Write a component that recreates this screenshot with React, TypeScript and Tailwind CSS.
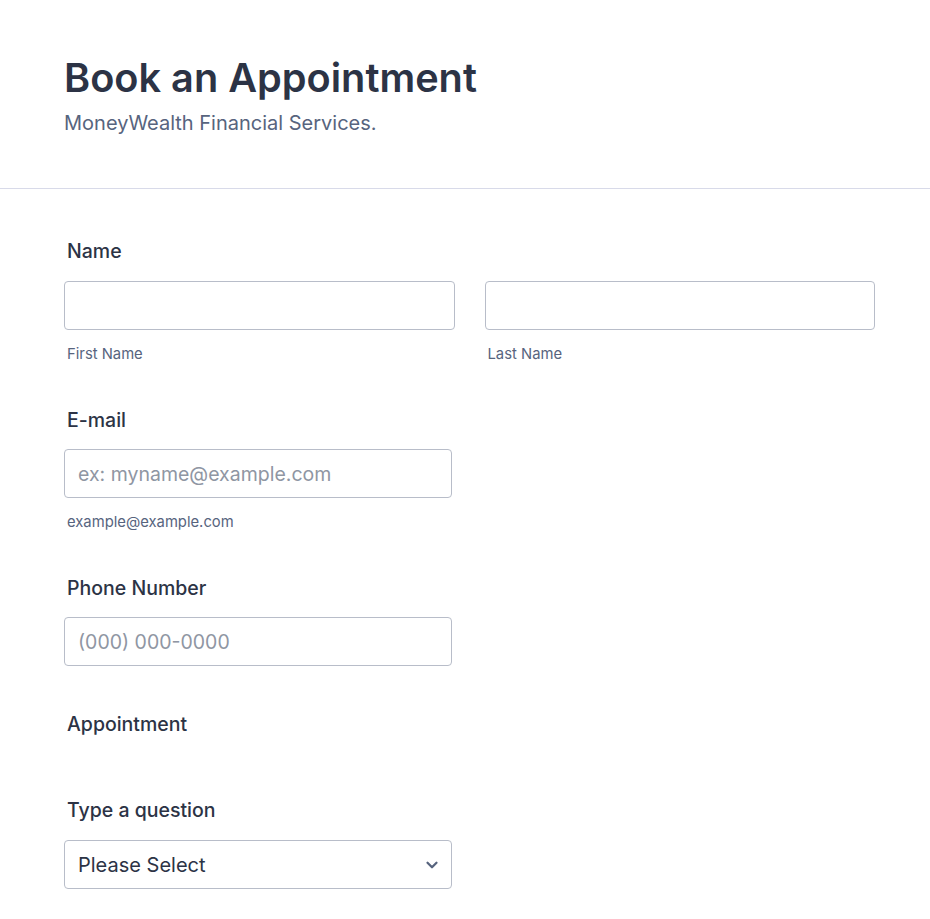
import { ChevronDown } from "lucide-react";

const inputCls =
  "block h-[49px] w-full rounded-[4px] border border-[#b8bdc9] bg-white px-[13px] text-[19.5px] text-[#2c3345] placeholder:text-[#8f96a3] outline-none";

function Label({ children }: { children: React.ReactNode }) {
  return (
    <div className="pl-[3px] text-[19.5px] leading-[24px] font-medium text-[#2c3345]">
      {children}
    </div>
  );
}

function SubLabel({ children }: { children: React.ReactNode }) {
  return (
    <div className="mt-[15px] pl-[3px] text-[14.8px] leading-[18px] text-[#57647e]">
      {children}
    </div>
  );
}

export default function App() {
  return (
    <div
      className="min-h-screen bg-white"
      style={{ fontFamily: "Inter, 'Noto Sans', sans-serif" }}
    >
      {/* Header */}
      <div className="border-b border-[#d8dae9] px-16 pt-[54px] pb-[53px]">
        <h1 className="text-[39.7px] leading-[48px] font-semibold text-[#2c3345]">
          Book an Appointment
        </h1>
        <p className="mt-[9px] text-[20px] leading-[24px] text-[#57647e]">
          MoneyWealth Financial Services.
        </p>
      </div>

      {/* Form */}
      <div className="px-16 pt-[50px]">
        <Label>Name</Label>
        <div className="mt-[18px] grid grid-cols-2 gap-[30px] w-[811px]">
          <div>
            <input className={inputCls} />
            <SubLabel>First Name</SubLabel>
          </div>
          <div>
            <input className={inputCls} />
            <SubLabel>Last Name</SubLabel>
          </div>
        </div>

        <div className="mt-[45px] w-[388px]">
          <Label>E-mail</Label>
          <input
            className={`mt-[17px] ${inputCls}`}
            placeholder="ex: myname@example.com"
          />
          <SubLabel>example@example.com</SubLabel>
        </div>

        <div className="mt-[45px] w-[388px]">
          <Label>Phone Number</Label>
          <input
            className={`mt-[17px] ${inputCls}`}
            placeholder="(000) 000-0000"
          />
        </div>

        <div className="mt-[46px]">
          <Label>Appointment</Label>
        </div>

        <div className="mt-[62px] w-[388px]">
          <Label>Type a question</Label>
          <div className="relative mt-[18px]">
            <div className={`${inputCls} flex items-center text-[20px]`}>
              Please Select
            </div>
            <ChevronDown
              className="absolute right-[11px] top-1/2 h-[18px] w-[18px] -translate-y-1/2 text-[#57647e]"
              strokeWidth={3}
            />
          </div>
        </div>
      </div>
    </div>
  );
}
